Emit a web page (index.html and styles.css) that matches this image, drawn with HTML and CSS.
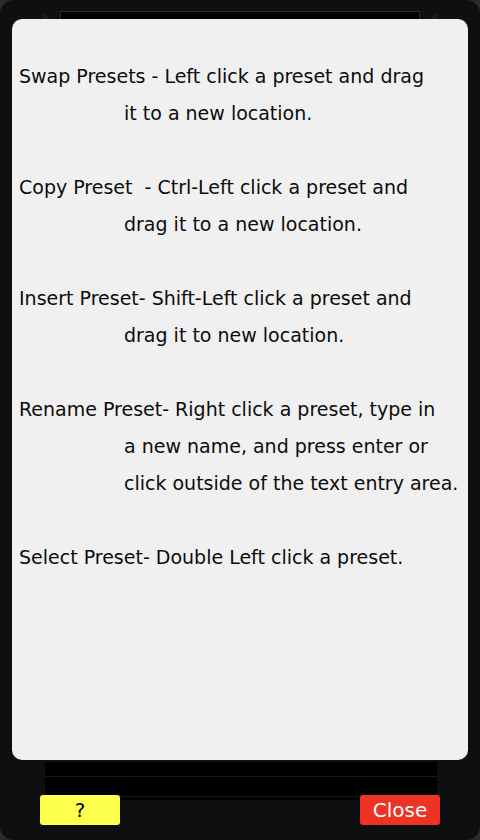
FILE: index.html
```html
<!DOCTYPE html>
<html lang="en">
<head>
  <meta charset="UTF-8">
  <meta name="viewport" content="width=device-width, initial-scale=1.0">
  <title>Preset Help</title>
  <link rel="stylesheet" href="styles.css">
</head>
<body>
  <div class="frame">
    <!-- display strip peeking out above the help sheet -->
    <div class="top-strip">
      <span class="arrow"></span>
      <div class="strip-screen"></div>
      <span class="arrow"></span>
    </div>

    <div class="help-sheet">
      <div class="help-item">
        <span class="title">Swap Presets - Left click a preset and drag</span>
        <span class="more">it to a new location.</span>
      </div>
      <div class="help-item">
        <span class="title">Copy Preset&nbsp; - Ctrl-Left click a preset and</span>
        <span class="more">drag it to a new location.</span>
      </div>
      <div class="help-item">
        <span class="title">Insert Preset- Shift-Left click a preset and</span>
        <span class="more">drag it to new location.</span>
      </div>
      <div class="help-item">
        <span class="title">Rename Preset- Right click a preset, type in</span>
        <span class="more">a new name, and press enter or</span>
        <span class="more">click outside of the text entry area.</span>
      </div>
      <div class="help-item">
        <span class="title">Select Preset- Double Left click a preset.</span>
      </div>
    </div>

    <!-- preset list lines showing under the sheet -->
    <div class="list-lines"></div>

    <div class="button-row">
      <button class="button help-btn">?</button>
      <button class="button close-btn">Close</button>
    </div>
  </div>
</body>
</html>
```

FILE: styles.css
```css
body {
  margin: 0;
  background-color: #2a2a2a;
  font-family: "DejaVu Sans", Verdana, sans-serif;
}
.frame {
  width: 480px;
  height: 840px;
  box-sizing: border-box;
  background-color: #0d0f10;
  border-radius: 14px;
  padding: 0 12px;
  display: flex;
  flex-direction: column;
  overflow: hidden;
}
.top-strip {
  height: 19px;
  display: flex;
  align-items: flex-end;
  justify-content: center;
  gap: 10px;
}
.strip-screen {
  width: 358px;
  height: 7px;
  background-color: #000;
  border: 1px solid #2c2c2c;
  border-bottom: none;
}
.arrow {
  width: 0;
  height: 0;
  border-bottom: 6px solid #2a1614;
  border-left: 5px solid transparent;
  border-right: 5px solid transparent;
}
.help-sheet {
  height: 741px;
  box-sizing: border-box;
  background-color: #f0f0f0;
  border-radius: 10px;
  padding: 39px 0 0 7px;
  color: #0c0c0c;
  font-size: 19px;
}
.help-item {
  display: flex;
  flex-direction: column;
  margin-bottom: 37px;
}
.help-item span {
  line-height: 37px;
  white-space: nowrap;
}
.more {
  padding-left: 105px;
}
.list-lines {
  height: 38px;
  margin: 2px 31px 0 33px;
  background: repeating-linear-gradient(to bottom, #000 0, #000 14px, #1a1a1a 14px, #1a1a1a 15px, #000 15px, #000 20px);
  border-radius: 0 0 8px 8px;
}
.button-row {
  display: flex;
  justify-content: space-between;
  padding: 0 28px;
  margin-top: -5px;
}
.button {
  width: 80px;
  height: 30px;
  border: none;
  border-radius: 3px;
  font-family: "DejaVu Sans", Verdana, sans-serif;
  font-size: 20px;
  padding: 0;
}
.help-btn {
  background-color: #ffff4f;
  color: #000;
}
.close-btn {
  background-color: #ee3224;
  color: #fff;
}
```
